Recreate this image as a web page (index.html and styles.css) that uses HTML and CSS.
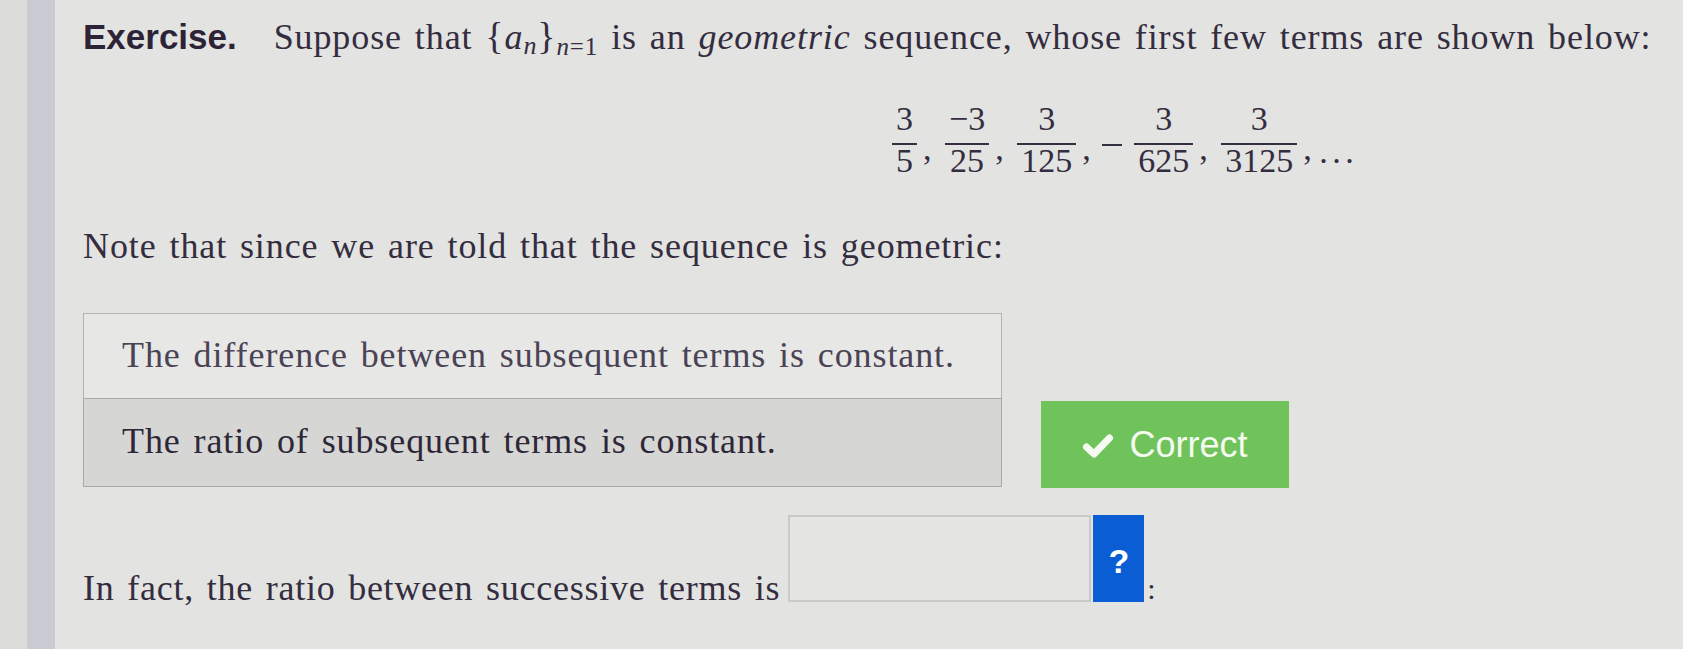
FILE: index.html
```html
<!DOCTYPE html>
<html lang="en">
<head>
<meta charset="utf-8">
<title>Exercise</title>
<link rel="stylesheet" href="styles.css">
</head>
<body>
<div class="page">
  <div class="strip"></div>
  <main class="content">
    <p class="intro"><span class="label">Exercise.</span> Suppose that <span class="set"><span class="brace">{</span><i>a</i><sub class="sub-n"><i>n</i></sub><span class="brace">}</span></span><sub class="sub-idx"><i>n</i>=1</sub> is an <i>geometric</i> sequence, whose first few terms are shown below:</p>

    <div class="seq">
      <span class="frac"><span class="num">3</span><span class="den">5</span></span>
      <span class="sep">,</span>
      <span class="frac"><span class="num">−3</span><span class="den">25</span></span>
      <span class="sep">,</span>
      <span class="frac"><span class="num">3</span><span class="den">125</span></span>
      <span class="sep sep-short">,</span>
      <span class="minus"></span>
      <span class="frac"><span class="num">3</span><span class="den">625</span></span>
      <span class="sep">,</span>
      <span class="frac"><span class="num">3</span><span class="den">3125</span></span>
      <span class="sep sep-last">,</span>
      <span class="dots">. . .</span>
    </div>

    <p class="note">Note that since we are told that the sequence is geometric:</p>

    <div class="choices">
      <div class="options">
        <div class="option option-plain">The difference between subsequent terms is constant.</div>
        <div class="option option-picked">The ratio of subsequent terms is constant.</div>
      </div>
      <div class="feedback">
        <svg class="check" width="32" height="26" viewBox="0 0 32 26" aria-hidden="true"><path d="M4.5 14 L12 21 L27.5 5" fill="none" stroke="#f6fbf2" stroke-width="7" stroke-linecap="round" stroke-linejoin="round"/></svg>
        <span>Correct</span>
      </div>
    </div>

    <div class="answer">
      <span class="answer-text">In fact, the ratio between successive terms is</span>
      <span class="input"></span>
      <span class="help">?</span>
      <span class="colon">:</span>
    </div>
  </main>
</div>
</body>
</html>
```
FILE: styles.css
```css
html, body {
  margin: 0;
  padding: 0;
}
body {
  background: #e3e3e1;
  width: 1683px;
  height: 649px;
  overflow: hidden;
  font-family: "Liberation Serif", "Times New Roman", serif;
  color: #342d40;
}
.page {
  display: flex;
  height: 649px;
  background: linear-gradient(90deg, #dcdcdb 0, #dcdcdb 27px, transparent 27px);
}
.strip {
  width: 28px;
  margin-left: 27px;
  background: #cacad2;
  flex: none;
}
.content {
  padding-left: 28px;
  flex: 1;
}
.intro, .note, .option, .answer-text {
  letter-spacing: 0.9px;
  word-spacing: 3px;
}
.intro {
  margin: 12px 0 0;
  font-size: 36px;
  line-height: 48px;
  white-space: nowrap;
}
.label {
  font-family: "Liberation Sans", Arial, sans-serif;
  font-weight: bold;
  font-size: 35px;
  letter-spacing: 0;
  color: #2c2436;
  margin-right: 24px;
}
.brace {
  font-size: 38px;
}
.intro sub {
  font-size: 25px;
  vertical-align: -6px;
  line-height: 0;
}
.intro .sub-n {
  font-size: 26px;
  vertical-align: -5px;
}
.seq {
  display: flex;
  align-items: flex-start;
  margin: 44px 0 0 809px;
  height: 70px;
  font-size: 34px;
}
.frac {
  display: flex;
  flex-direction: column;
  align-items: center;
}
.num, .den {
  display: block;
  height: 28px;
  line-height: 28px;
  padding: 0 4px;
}
.num {
  padding-bottom: 10px;
  border-bottom: 2px solid #352f40;
  align-self: stretch;
  text-align: center;
}
.den {
  margin-top: 2px;
}
.sep {
  width: 28px;
  padding-left: 6px;
  box-sizing: border-box;
  line-height: 28px;
  margin-top: 30px;
}
.sep-short {
  width: 26px;
}
.sep-last {
  width: 22px;
}
.minus {
  width: 20px;
  height: 2px;
  background: #352f40;
  margin-top: 39px;
  margin-right: 12px;
}
.dots {
  line-height: 28px;
  margin-top: 33px;
  letter-spacing: -2px;
}
.note {
  margin: 47px 0 0;
  font-size: 36px;
  line-height: 48px;
}
.choices {
  display: flex;
  align-items: flex-end;
  margin-top: 43px;
}
.options {
  width: 919px;
  display: flex;
  flex-direction: column;
}
.option {
  box-sizing: border-box;
  border: 1px solid #b3b3b3;
  font-size: 36px;
  line-height: 40px;
  padding-left: 38px;
}
.option-plain {
  height: 86px;
  padding-top: 21px;
  background: #e7e7e5;
  color: #4a4355;
}
.option-picked {
  height: 89px;
  padding-top: 22px;
  margin-top: -1px;
  background: #d6d6d4;
  border-color: #a9a9a9;
  color: #2e2738;
}
.feedback {
  margin-left: 39px;
  margin-bottom: -1px;
  width: 248px;
  height: 87px;
  background: #70c35b;
  color: #f6fbf2;
  display: flex;
  align-items: center;
  justify-content: center;
  gap: 15px;
  font-family: "Liberation Sans", Arial, sans-serif;
  font-size: 36px;
}
.check {
  margin-top: 2px;
}
.answer {
  display: flex;
  align-items: flex-end;
  margin-top: 28px;
}
.answer-text {
  font-size: 36px;
  line-height: 40px;
  letter-spacing: 0.75px;
  margin-bottom: -6px;
  margin-right: 8px;
  white-space: nowrap;
}
.input {
  width: 303px;
  height: 87px;
  box-sizing: border-box;
  border: 2px solid #c9c9c7;
  background: #e5e5e3;
}
.help {
  width: 51px;
  height: 87px;
  margin-left: 2px;
  background: #0a5dd3;
  color: #ffffff;
  font-family: "Liberation Sans", Arial, sans-serif;
  font-weight: bold;
  font-size: 34px;
  display: flex;
  align-items: center;
  justify-content: center;
  padding-top: 6px;
  box-sizing: border-box;
}
.colon {
  font-size: 30px;
  line-height: 30px;
  margin-left: 3px;
  margin-bottom: -2px;
}
```
